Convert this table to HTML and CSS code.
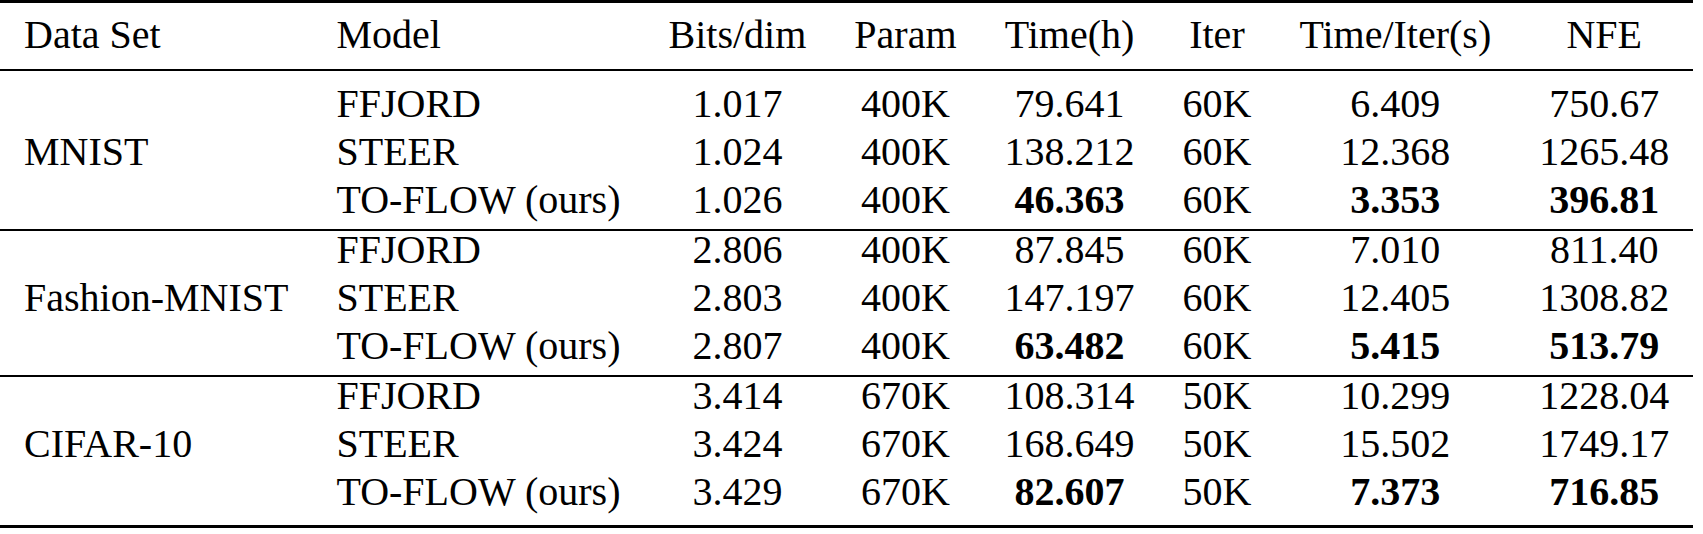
FILE: index.html
```html
<!DOCTYPE html>
<html lang="en">
<head>
<meta charset="utf-8">
<title>Results table</title>
<link rel="stylesheet" href="styles.css">
</head>
<body>
<table class="results">
  <thead>
    <tr>
      <th class="left">Data Set</th>
      <th class="left">Model</th>
      <th>Bits/dim</th>
      <th>Param</th>
      <th>Time(h)</th>
      <th>Iter</th>
      <th>Time/Iter(s)</th>
      <th>NFE</th>
    </tr>
  </thead>
  <tbody class="group group-first">
    <tr class="row-first">
      <td class="left dataset" rowspan="3">MNIST</td>
      <td class="left">FFJORD</td>
      <td>1.017</td><td>400K</td><td>79.641</td><td>60K</td><td>6.409</td><td>750.67</td>
    </tr>
    <tr>
      <td class="left">STEER</td>
      <td>1.024</td><td>400K</td><td>138.212</td><td>60K</td><td>12.368</td><td>1265.48</td>
    </tr>
    <tr>
      <td class="left">TO-FLOW (ours)</td>
      <td>1.026</td><td>400K</td><td class="best">46.363</td><td>60K</td><td class="best">3.353</td><td class="best">396.81</td>
    </tr>
  </tbody>
  <tbody class="group">
    <tr class="row-first">
      <td class="left dataset" rowspan="3">Fashion-MNIST</td>
      <td class="left">FFJORD</td>
      <td>2.806</td><td>400K</td><td>87.845</td><td>60K</td><td>7.010</td><td>811.40</td>
    </tr>
    <tr>
      <td class="left">STEER</td>
      <td>2.803</td><td>400K</td><td>147.197</td><td>60K</td><td>12.405</td><td>1308.82</td>
    </tr>
    <tr>
      <td class="left">TO-FLOW (ours)</td>
      <td>2.807</td><td>400K</td><td class="best">63.482</td><td>60K</td><td class="best">5.415</td><td class="best">513.79</td>
    </tr>
  </tbody>
  <tbody class="group group-last">
    <tr class="row-first">
      <td class="left dataset" rowspan="3">CIFAR-10</td>
      <td class="left">FFJORD</td>
      <td>3.414</td><td>670K</td><td>108.314</td><td>50K</td><td>10.299</td><td>1228.04</td>
    </tr>
    <tr>
      <td class="left">STEER</td>
      <td>3.424</td><td>670K</td><td>168.649</td><td>50K</td><td>15.502</td><td>1749.17</td>
    </tr>
    <tr class="row-last">
      <td class="left">TO-FLOW (ours)</td>
      <td>3.429</td><td>670K</td><td class="best">82.607</td><td>50K</td><td class="best">7.373</td><td class="best">716.85</td>
    </tr>
  </tbody>
</table>
</body>
</html>
```

FILE: styles.css
```css
html, body {
  margin: 0;
  padding: 0;
  background: #ffffff;
}

.results {
  border-collapse: separate;
  border-spacing: 0;
  font-family: "Liberation Serif", "Times New Roman", serif;
  font-size: 40px;
  color: #000000;
}

.results th,
.results td {
  font-weight: normal;
  line-height: 37px;
  padding: 0 24px 11px 24px;
  text-align: center;
  white-space: nowrap;
}

.results th {
  padding-top: 13px;
  padding-bottom: 16px;
  border-top: 3px solid #000;
  border-bottom: 2px solid #000;
}

.results .left {
  text-align: left;
}

.results .dataset {
  vertical-align: middle;
}

.results .best {
  font-weight: bold;
}

.group-first .row-first td {
  padding-top: 14px;
}

.group:not(.group-first) .row-first td {
  border-top: 2px solid #000;
}

.group-last .row-last td,
.group-last .dataset {
  border-bottom: 3px solid #000;
}

.group-last .row-last td {
  padding-bottom: 15px;
}

.group-last .dataset {
  padding-bottom: 15px;
}
```
